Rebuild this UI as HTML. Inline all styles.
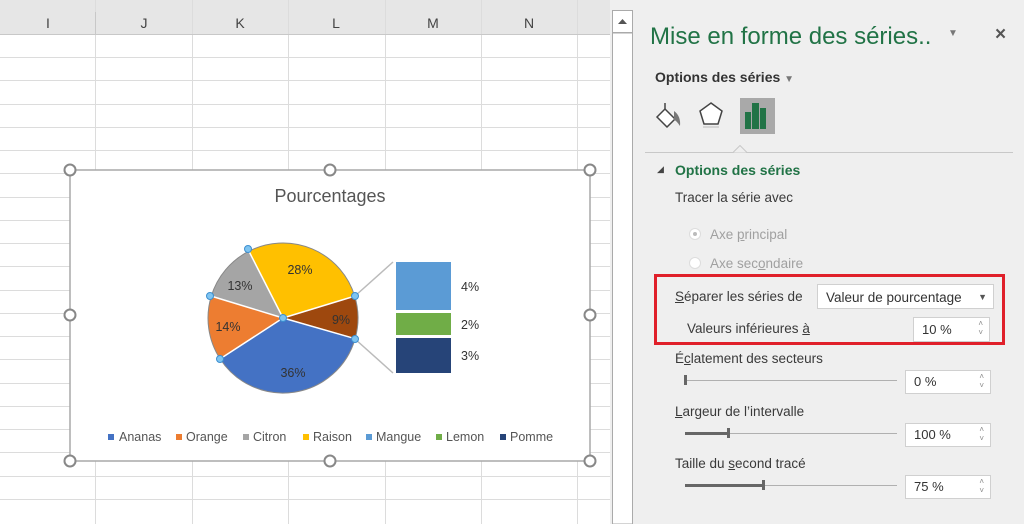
<!DOCTYPE html>
<html><head><meta charset="utf-8"><style>
body{margin:0;width:1024px;height:524px;overflow:hidden;background:#fff;font-family:"Liberation Sans",sans-serif;position:relative}
.p{position:absolute;left:637px;top:0;width:387px;height:524px;background:#efefef}
.t{position:absolute;font-size:13.5px;color:#3a3a3a;white-space:nowrap}
.g{color:#a0a0a0}
.box{position:absolute;background:#fff;border:1px solid #d0d0d0;font-size:13px;color:#333;height:22px;line-height:22px;padding-left:8px;box-sizing:border-box}
.sp{position:absolute;right:6px;top:1px;font-size:8px;line-height:9px;color:#888}
.sl{position:absolute;height:1px;background:#b0b0b0}
</style></head><body>
<svg width="637" height="524" style="position:absolute;left:0;top:0">
<rect x="0" y="0" width="610" height="35" fill="#e6e6e6"/>
<g stroke="#dcdcdc" stroke-width="1">
<line x1="95.5" y1="0" x2="95.5" y2="524"/><line x1="192.5" y1="0" x2="192.5" y2="524"/><line x1="288.5" y1="0" x2="288.5" y2="524"/><line x1="385.5" y1="0" x2="385.5" y2="524"/><line x1="481.5" y1="0" x2="481.5" y2="524"/><line x1="577.5" y1="0" x2="577.5" y2="524"/>
<line x1="0" y1="57.5" x2="610" y2="57.5"/><line x1="0" y1="80.5" x2="610" y2="80.5"/><line x1="0" y1="104.5" x2="610" y2="104.5"/><line x1="0" y1="127.5" x2="610" y2="127.5"/><line x1="0" y1="150.5" x2="610" y2="150.5"/><line x1="0" y1="173.5" x2="610" y2="173.5"/><line x1="0" y1="197.5" x2="610" y2="197.5"/><line x1="0" y1="220.5" x2="610" y2="220.5"/><line x1="0" y1="243.5" x2="610" y2="243.5"/><line x1="0" y1="266.5" x2="610" y2="266.5"/><line x1="0" y1="290.5" x2="610" y2="290.5"/><line x1="0" y1="313.5" x2="610" y2="313.5"/><line x1="0" y1="336.5" x2="610" y2="336.5"/><line x1="0" y1="359.5" x2="610" y2="359.5"/><line x1="0" y1="383.5" x2="610" y2="383.5"/><line x1="0" y1="406.5" x2="610" y2="406.5"/><line x1="0" y1="429.5" x2="610" y2="429.5"/><line x1="0" y1="452.5" x2="610" y2="452.5"/><line x1="0" y1="476.5" x2="610" y2="476.5"/><line x1="0" y1="499.5" x2="610" y2="499.5"/>
</g>
<line x1="0" y1="34.5" x2="610" y2="34.5" stroke="#c8c8c8"/>
<g stroke="#c8c8c8"><line x1="95.5" y1="12" x2="95.5" y2="35"/></g>
<g font-size="14" fill="#444" text-anchor="middle"><text x="48" y="28">I</text><text x="144" y="28">J</text><text x="240" y="28">K</text><text x="336" y="28">L</text><text x="433" y="28">M</text><text x="529" y="28">N</text></g>
<rect x="610" y="0" width="27" height="524" fill="#efefef"/>
<rect x="612.5" y="10.5" width="20" height="22" fill="#fff" stroke="#aaa"/>
<path d="M618 24 L622.5 19 L627 24Z" fill="#555"/>
<rect x="612.5" y="33" width="20" height="491" fill="#fff" stroke="#aaa"/>
<rect x="70" y="170" width="520" height="291" fill="#fff" stroke="#a8a8a8" stroke-width="1.5"/>
<text x="330" y="202" font-size="18" fill="#555" text-anchor="middle">Pourcentages</text>
<g stroke="#888" stroke-width="1">
<path d="M283 318 L354.7 296.1 A75 75 0 0 1 355.1 338.7Z" fill="#9e480e"/>
<path d="M283 318 L355.1 338.7 A75 75 0 0 1 220.1 358.9Z" fill="#4472c4"/>
<path d="M283 318 L220.1 358.9 A75 75 0 0 1 211.3 296.1Z" fill="#ed7d31"/>
<path d="M283 318 L211.3 296.1 A75 75 0 0 1 248.9 251.2Z" fill="#a5a5a5"/>
<path d="M283 318 L248.9 251.2 A75 75 0 0 1 354.7 296.1Z" fill="#ffc000"/>
</g>
<g stroke="#fff" stroke-width="1.5"><line x1="283" y1="318" x2="354.7" y2="296.1"/><line x1="283" y1="318" x2="355.1" y2="338.7"/><line x1="283" y1="318" x2="220.1" y2="358.9"/><line x1="283" y1="318" x2="211.3" y2="296.1"/><line x1="283" y1="318" x2="248.9" y2="251.2"/></g>
<g stroke="#bbb" stroke-width="1.5"><line x1="355" y1="296" x2="393" y2="262"/><line x1="355" y1="339" x2="393" y2="373"/></g>
<rect x="396" y="262" width="55" height="48" fill="#5b9bd5"/>
<rect x="396" y="313" width="55" height="22" fill="#70ad47"/>
<rect x="396" y="338" width="55" height="35" fill="#264478"/>
<g font-size="12.5" fill="#333"><text x="300" y="274" text-anchor="middle">28%</text><text x="240" y="290" text-anchor="middle">13%</text><text x="228" y="331" text-anchor="middle">14%</text><text x="341" y="324" text-anchor="middle">9%</text><text x="293" y="377" text-anchor="middle">36%</text><text x="461" y="291">4%</text><text x="461" y="329">2%</text><text x="461" y="360">3%</text></g>
<g fill="#7fc4f0" stroke="#3c8fd0" stroke-width="1"><circle cx="283" cy="318" r="3.5"/><circle cx="248" cy="249" r="3.5"/><circle cx="210" cy="296" r="3.5"/><circle cx="220" cy="359" r="3.5"/><circle cx="355" cy="296" r="3.5"/><circle cx="355" cy="339" r="3.5"/></g>
<g font-size="12.5" fill="#555"><rect x="108" y="434" width="6" height="6" fill="#4472c4"/><text x="119" y="441">Ananas</text><rect x="176" y="434" width="6" height="6" fill="#ed7d31"/><text x="186" y="441">Orange</text><rect x="243" y="434" width="6" height="6" fill="#a5a5a5"/><text x="253" y="441">Citron</text><rect x="303" y="434" width="6" height="6" fill="#ffc000"/><text x="313" y="441">Raison</text><rect x="366" y="434" width="6" height="6" fill="#5b9bd5"/><text x="376" y="441">Mangue</text><rect x="436" y="434" width="6" height="6" fill="#70ad47"/><text x="446" y="441">Lemon</text><rect x="500" y="434" width="6" height="6" fill="#264478"/><text x="510" y="441">Pomme</text></g>
<g fill="#fff" stroke="#888" stroke-width="2"><circle cx="70" cy="170" r="5.5"/><circle cx="330" cy="170" r="5.5"/><circle cx="590" cy="170" r="5.5"/><circle cx="70" cy="315" r="5.5"/><circle cx="590" cy="315" r="5.5"/><circle cx="70" cy="461" r="5.5"/><circle cx="330" cy="461" r="5.5"/><circle cx="590" cy="461" r="5.5"/></g>
</svg>
<div class="p">
<div class="t" style="left:13px;top:23px;font-size:24px;color:#217346">Mise en forme des séries..</div>
<div class="t" style="left:311px;top:28px;font-size:10px;color:#777">▼</div>
<div class="t" style="left:358px;top:24px;font-size:19px;color:#555;font-weight:bold">×</div>
<div class="t" style="left:18px;top:69px;font-size:14px;font-weight:bold;color:#333">Options des séries <span style="font-size:10px;color:#777">▼</span></div>
<svg width="160" height="45" style="position:absolute;left:14px;top:98px">
<path d="M6 19 L14 11 L24 21 L16 29Z" fill="#fff" stroke="#444" stroke-width="1.5"/><path d="M14 11 L14 5" stroke="#444" stroke-width="1.5"/><path d="M23 13 Q30 18 29 28 Q25 22 23 22Z" fill="#777"/>
<path d="M60 5 L71 13 L67 26 L53 26 L49 13Z" fill="#fff" stroke="#444" stroke-width="1.5"/><path d="M52 29 H68" stroke="#bbb" stroke-width="1"/>
<rect x="89" y="0" width="35" height="36" fill="#a9a9a9"/><rect x="94" y="14" width="6" height="17" fill="#217346"/><rect x="101" y="5" width="7" height="26" fill="#217346"/><rect x="109" y="10" width="6" height="21" fill="#217346"/>
</svg>
<div style="position:absolute;left:8px;top:152px;width:368px;height:1px;background:#c8c8c8"></div>
<svg width="20" height="8" style="position:absolute;left:96px;top:145px"><path d="M0 7.5 L7 0.5 L14 7.5" fill="#efefef" stroke="#c8c8c8"/></svg>
<div class="t" style="left:20px;top:164px;font-size:9px;color:#444">◢</div>
<div class="t" style="left:38px;top:162px;font-size:14px;font-weight:bold;color:#217346">Options des séries</div>
<div class="t" style="left:38px;top:190px">Tracer la série avec</div>
<div style="position:absolute;left:53px;top:229px;width:10px;height:10px;border-radius:50%;background:#fff;box-shadow:0 0 0 1px #ddd"></div><div style="position:absolute;left:56px;top:232px;width:4px;height:4px;border-radius:50%;background:#bbb"></div>
<div class="t g" style="left:73px;top:227px">Axe <u>p</u>rincipal</div>
<div style="position:absolute;left:53px;top:258px;width:10px;height:10px;border-radius:50%;background:#fff;box-shadow:0 0 0 1px #ddd"></div>
<div class="t g" style="left:73px;top:256px">Axe sec<u>o</u>ndaire</div>
<div style="position:absolute;left:17px;top:274px;width:351px;height:71px;border:3px solid #e0202a;box-sizing:border-box"></div>
<div class="t" style="left:38px;top:289px"><u>S</u>éparer les séries de</div>
<div class="box" style="left:180px;top:284px;width:177px;height:25px;line-height:25px;font-size:13.5px">Valeur de pourcentage<span style="position:absolute;right:6px;font-size:9px;color:#555">▼</span></div>
<div class="t" style="left:50px;top:321px">Valeurs inférieures <u>à</u></div>
<div class="box" style="left:276px;top:317px;width:77px;height:25px;line-height:24px">10 %<div class="sp">˄<br>˅</div></div>
<div class="t" style="left:38px;top:351px">É<u>c</u>latement des secteurs</div>
<div class="sl" style="left:48px;top:380px;width:212px"></div><div style="position:absolute;left:47px;top:375px;width:3px;height:10px;background:#666"></div>
<div class="box" style="left:268px;top:370px;width:86px;height:24px">0 %<div class="sp">˄<br>˅</div></div>
<div class="t" style="left:38px;top:404px"><u>L</u>argeur de l’intervalle</div>
<div class="sl" style="left:48px;top:433px;width:212px"></div><div style="position:absolute;left:48px;top:432px;width:44px;height:3px;background:#666"></div><div style="position:absolute;left:90px;top:428px;width:3px;height:10px;background:#666"></div>
<div class="box" style="left:268px;top:423px;width:86px;height:24px">100 %<div class="sp">˄<br>˅</div></div>
<div class="t" style="left:38px;top:456px">Taille du <u>s</u>econd tracé</div>
<div class="sl" style="left:48px;top:485px;width:212px"></div><div style="position:absolute;left:48px;top:484px;width:78px;height:3px;background:#666"></div><div style="position:absolute;left:125px;top:480px;width:3px;height:10px;background:#666"></div>
<div class="box" style="left:268px;top:475px;width:86px;height:24px">75 %<div class="sp">˄<br>˅</div></div>
</div>
</body></html>
